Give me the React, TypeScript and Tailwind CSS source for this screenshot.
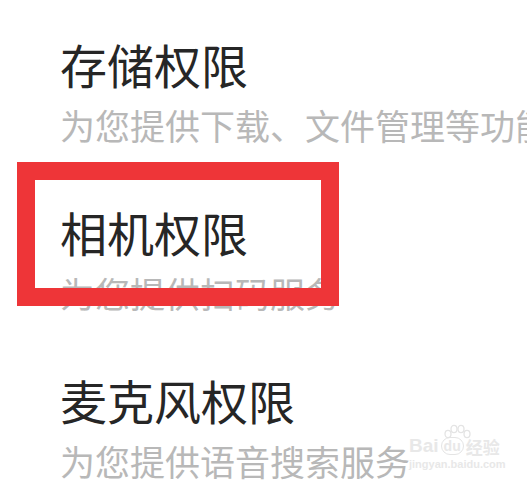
const items = [
  { title: '存储权限', desc: '为您提供下载、文件管理等功能' },
  { title: '相机权限', desc: '为您提供扫码服务' },
  { title: '麦克风权限', desc: '为您提供语音搜索服务' },
];

export default function App() {
  return (
    <div
      className="relative w-[527px] h-[491px] overflow-hidden bg-white"
      style={{ fontFamily: '"Noto Sans CJK SC", "Noto Sans", sans-serif' }}
    >
      <div className="flex flex-col gap-[66px] pl-[60px] pt-[40px]">
        {items.map((item) => (
          <div key={item.title} className="flex flex-col gap-[20px]">
            <div className="text-[47px] leading-[47px] text-[#262626] whitespace-nowrap">{item.title}</div>
            <div className="text-[35px] leading-[35px] text-[#b8b8b8] whitespace-nowrap">{item.desc}</div>
          </div>
        ))}
      </div>

      {/* highlight box */}
      <div className="absolute left-[17px] top-[162px] w-[322px] h-[144px] border-[18px] border-[#ee3538]" />

      {/* watermark */}
      <div className="absolute left-[409px] top-[436px] flex flex-col items-start text-[#e8e8e8]">
        <div className="flex items-end gap-[2px] leading-none">
          <span className="text-[19px] font-bold" style={{ fontFamily: '"Liberation Sans", sans-serif' }}>Bai</span>
          <span className="relative flex items-center">
            <svg width="34" height="16" viewBox="0 0 34 16" className="absolute -top-[13px] left-0" fill="none" stroke="#e4e4e4" strokeWidth="1.3">
              <ellipse cx="7" cy="10" rx="3" ry="3.6" />
              <ellipse cx="13" cy="5" rx="3" ry="3.6" />
              <ellipse cx="20" cy="5" rx="3" ry="3.6" />
              <ellipse cx="26" cy="10" rx="3" ry="3.6" />
            </svg>
            <span className="rounded-full border-[1.5px] border-[#e4e4e4] px-[2px] text-[14px] font-bold leading-[16px]" style={{ fontFamily: '"Liberation Sans", sans-serif' }}>du</span>
          </span>
          <span className="text-[17px] font-bold">经验</span>
        </div>
        <div className="text-[11px] leading-none mt-[4px] font-bold" style={{ fontFamily: '"Liberation Sans", sans-serif' }}>jingyan.baidu.com</div>
      </div>
    </div>
  );
}
